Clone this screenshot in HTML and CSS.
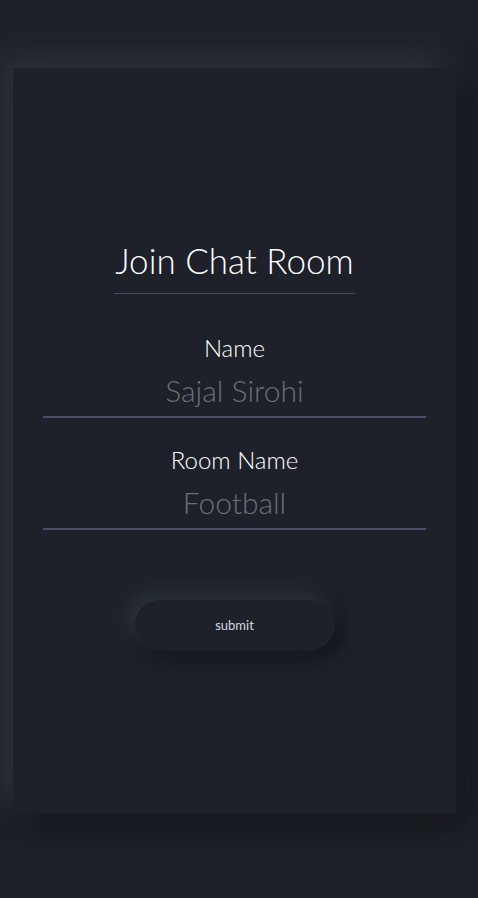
FILE: index.html
```html
<!DOCTYPE html>
<html lang="en">
<head>
<meta charset="utf-8">
<title>Join Chat Room</title>
<link rel="stylesheet" href="styles.css">
</head>
<body>
<main class="card">
  <form class="form">
    <h1 class="title">Join Chat Room</h1>
    <label class="field">
      <span class="label">Name</span>
      <input class="input" type="text" placeholder="Sajal Sirohi">
    </label>
    <label class="field">
      <span class="label">Room Name</span>
      <input class="input" type="text" placeholder="Football">
    </label>
    <button class="submit" type="button">submit</button>
  </form>
</main>
</body>
</html>
```
FILE: styles.css
```css
* { box-sizing: border-box; }
html, body { height: 100%; }
body {
  margin: 0;
  background: #1e2129;
  font-family: Lato, "Noto Sans", sans-serif;
  color: #ffffff;
  overflow: hidden;
}
.card {
  margin: 68px 0 0 13px;
  width: 443px;
  height: 745px;
  background: #1e2129;
  box-shadow: -14px -14px 28px #2a3139, 14px 14px 28px #15171b;
  padding: 0 30px;
}
.form {
  display: flex;
  flex-direction: column;
  align-items: center;
  padding-top: 172px;
}
.title {
  margin: 0;
  font-weight: 300;
  font-size: 35px;
  line-height: 40px;
  padding: 0 1px 13px;
  border-bottom: 1px solid #ff0000;
}
.field {
  display: flex;
  flex-direction: column;
  align-items: center;
  width: 100%;
}
.field:first-of-type { margin-top: 40px; }
.field + .field { margin-top: 28px; }
.label {
  font-size: 24px;
  line-height: 28px;
  font-weight: 300;
}
.input {
  width: 100%;
  background: transparent;
  border: 0;
  border-bottom: 2px solid #4b4e68;
  outline: none;
  font-family: inherit;
  font-size: 30px;
  font-weight: 300;
  line-height: 36px;
  padding: 10px 0 8px;
  text-align: center;
  color: #ffffff;
}
.input::placeholder { color: #6c6f72; }
.submit {
  margin-top: 70px;
  width: 200px;
  height: 50px;
  border: 0;
  border-radius: 25px;
  background: #1e2129;
  color: #d4d8e2;
  font-family: inherit;
  font-size: 13px;
  box-shadow: -8px -8px 18px #2a3139, 8px 8px 18px #14161a;
}
```
